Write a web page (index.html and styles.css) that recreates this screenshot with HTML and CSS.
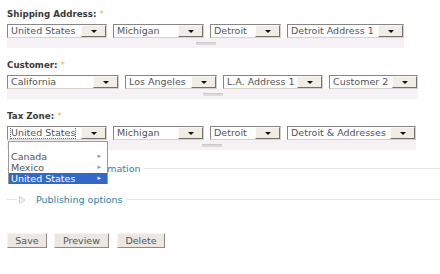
FILE: index.html
```html
<!DOCTYPE html>
<html>
<head>
<meta charset="utf-8">
<link rel="stylesheet" href="styles.css">
</head>
<body>
<div class="form">
  <div class="section">
    <div class="label">Shipping Address: <span class="req">*</span></div>
    <div class="hier">
      <div class="row">
        <div class="sel w100"><span class="val">United States</span><span class="btn"><i class="arr"></i></span></div>
        <div class="sel w91"><span class="val">Michigan</span><span class="btn"><i class="arr"></i></span></div>
        <div class="sel w71"><span class="val">Detroit</span><span class="btn"><i class="arr"></i></span></div>
        <div class="sel w117"><span class="val">Detroit Address 1</span><span class="btn"><i class="arr"></i></span></div>
      </div>
      <div class="strip"><span class="grip"></span></div>
    </div>
  </div>

  <div class="section">
    <div class="label">Customer: <span class="req">*</span></div>
    <div class="hier">
      <div class="row">
        <div class="sel w112"><span class="val">California</span><span class="btn"><i class="arr"></i></span></div>
        <div class="sel w92"><span class="val">Los Angeles</span><span class="btn"><i class="arr"></i></span></div>
        <div class="sel w100"><span class="val">L.A. Address 1</span><span class="btn"><i class="arr"></i></span></div>
        <div class="sel w89"><span class="val">Customer 2</span><span class="btn"><i class="arr"></i></span></div>
      </div>
      <div class="strip"><span class="grip"></span></div>
    </div>
  </div>

  <div class="section tax">
    <div class="label">Tax Zone: <span class="req">*</span></div>
    <div class="hier">
      <div class="row">
        <div class="sel w100"><span class="val"><span class="focus">United States</span></span><span class="btn"><i class="arr"></i></span></div>
        <div class="sel w91"><span class="val">Michigan</span><span class="btn"><i class="arr"></i></span></div>
        <div class="sel w71"><span class="val">Detroit</span><span class="btn"><i class="arr"></i></span></div>
        <div class="sel w129"><span class="val">Detroit &amp; Addresses</span><span class="btn"><i class="arr"></i></span></div>
      </div>
      <div class="strip"><span class="grip"></span></div>
    </div>
    <div class="menu">
      <div class="item">Canada<span class="sub">&#9656;</span></div>
      <div class="item">Mexico<span class="sub">&#9656;</span></div>
      <div class="item on">United States<span class="sub">&#9656;</span></div>
    </div>
  </div>

  <div class="fs first">
    <span class="line short"></span>
    <span class="legend"><svg class="tri" width="7" height="8" viewBox="0 0 7 8"><polygon points="0.5,0.5 6,4 0.5,7.5" fill="#f2f2f2" stroke="#cfcfcf"/></svg><a class="lg">Authoring information</a></span>
    <span class="line"></span>
  </div>
  <div class="fs second">
    <span class="line short"></span>
    <span class="legend"><svg class="tri" width="7" height="8" viewBox="0 0 7 8"><polygon points="0.5,0.5 6,4 0.5,7.5" fill="#f2f2f2" stroke="#cfcfcf"/></svg><a class="lg">Publishing options</a></span>
    <span class="line"></span>
  </div>

  <div class="buttons">
    <span class="b bsave">Save</span>
    <span class="b bprev">Preview</span>
    <span class="b bdel">Delete</span>
  </div>
</div>
</body>
</html>
```

FILE: styles.css
```css
html, body {
  margin: 0;
  padding: 0;
  background: #fff;
}
body {
  font-family: "DejaVu Sans", Verdana, sans-serif;
  font-size: 9.5px;
  color: #555;
}
.form {
  padding: 8px 0 0 7px;
}
.section {
  position: relative;
  margin-bottom: 11px;
}
.label {
  font-weight: bold;
  font-size: 8.7px;
  line-height: 12px;
  height: 12px;
  color: #3a3a3a;
  margin-bottom: 4px;
}
.req {
  color: #f2b33d;
  font-weight: normal;
}
.hier {
  display: inline-block;
  vertical-align: top;
}
.row {
  display: flex;
  gap: 6px;
}
.sel {
  display: flex;
  box-sizing: border-box;
  height: 14px;
  border: 1px solid;
  border-color: #868686 #d6d2ca #d6d2ca #868686;
  background: #fff;
}
.w71 { width: 71px; }
.w89 { width: 89px; }
.w91 { width: 91px; }
.w92 { width: 92px; }
.w100 { width: 100px; }
.w112 { width: 112px; }
.w117 { width: 117px; }
.w129 { width: 129px; }
.val {
  flex: 1;
  padding-left: 3px;
  line-height: 12px;
  white-space: nowrap;
  overflow: hidden;
  color: #555;
}
.focus {
  outline: 1px dotted #666;
  outline-offset: 0;
}
.btn {
  width: 25px;
  box-sizing: border-box;
  background: #f1ede6;
  border-right: 1px solid #77726a;
  border-bottom: 1px solid #77726a;
  border-top: 1px solid #fbfaf7;
  border-left: 1px solid #fbfaf7;
  display: flex;
  align-items: center;
  justify-content: center;
}
.arr {
  width: 0;
  height: 0;
  border-left: 3px solid transparent;
  border-right: 3px solid transparent;
  border-top: 3px solid #111;
}
.strip {
  height: 10px;
  background: #f5f1f5;
  display: flex;
  justify-content: center;
  align-items: flex-end;
}
.grip {
  width: 20px;
  height: 2px;
  margin-bottom: 3px;
  background: #dcd8dc;
  border-top: 1px solid #ccc8cc;
}
.menu {
  position: absolute;
  left: 1px;
  top: 31px;
  width: 100px;
  height: 43px;
  box-sizing: border-box;
  background: #fff;
  border: 1px solid #9a9a9a;
  padding-top: 9px;
  z-index: 5;
}
.item {
  position: relative;
  height: 11px;
  line-height: 11px;
  padding-left: 2px;
  font-size: 9.5px;
  color: #555;
}
.item.on {
  background: #3368c8;
  color: #fff;
}
.sub {
  position: absolute;
  right: 6px;
  top: 0;
  font-size: 7px;
  color: #999;
}
.item.on .sub {
  color: #dde6f7;
}
.fs {
  display: flex;
  align-items: center;
  height: 13px;
}
.fs.first {
  margin-top: 12px;
}
.fs.second {
  margin-top: 18px;
}
.line {
  flex: 1;
  height: 1px;
  background: #e6e6e6;
}
.line.short {
  flex: 0 0 10px;
}
.legend {
  display: flex;
  align-items: center;
  padding: 0 3px 0 2px;
}
.tri {
  display: block;
  margin-right: 10px;
}
.lg {
  color: #2f82a3;
  font-size: 9.5px;
  line-height: 13px;
  white-space: nowrap;
}
.buttons {
  display: flex;
  margin-top: 27px;
}
.b {
  display: flex;
  align-items: center;
  justify-content: center;
  box-sizing: border-box;
  height: 15px;
  background: #ece8e1;
  border-top: 1px solid #f6f4f0;
  border-left: 1px solid #f6f4f0;
  border-right: 1px solid #8d8982;
  border-bottom: 1px solid #8d8982;
  color: #555;
  font-size: 9.5px;
}
.bsave { width: 40px; margin-right: 7px; }
.bprev { width: 55px; margin-right: 8px; }
.bdel { width: 48px; }
```
